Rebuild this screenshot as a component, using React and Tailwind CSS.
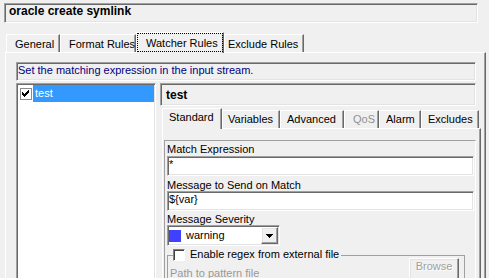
const sunken =
  "border border-t-[#a0a0a0] border-l-[#a0a0a0] border-r-white border-b-white shadow-[inset_1px_1px_0_#696969,inset_-1px_-1px_0_#e3e3e3]";
const raised =
  "border border-t-white border-l-white border-r-[#696969] border-b-[#696969] shadow-[inset_-1px_-1px_0_#a0a0a0,inset_1px_1px_0_#e3e3e3]";

function Tab({ w, pl, children, disabled }) {
  return (
    <div
      className={`${w} ${pl} h-[18px] shrink-0 border-t border-l border-white border-r border-r-[#696969] shadow-[inset_-1px_0_0_#a0a0a0] pt-[3px] whitespace-nowrap ${
        disabled ? "text-[#909090]" : ""
      }`}
    >
      {children}
    </div>
  );
}

function InnerTab({ w, pl, children, disabled }) {
  return (
    <div
      className={`${w} ${pl} h-[18px] shrink-0 border-t border-l border-white border-r border-r-[#696969] shadow-[inset_-1px_0_0_#a0a0a0] pt-[2px] whitespace-nowrap ${
        disabled ? "text-[#909090]" : ""
      }`}
    >
      {children}
    </div>
  );
}

function CheckMark() {
  return (
    <svg width="10" height="10" viewBox="0 0 10 10" shapeRendering="crispEdges">
      <path
        fill="#000"
        d="M7 1h1v1h-1z M6 2h2v1h-2z M1 3h1v1h-1z M5 3h3v1h-3z M1 4h2v1h-2z M4 4h3v1h-3z M1 5h5v1h-5z M2 6h3v1h-3z M3 7h1v1h-1z"
      />
    </svg>
  );
}

export default function App() {
  return (
    <div className="w-[489px] h-[278px] overflow-hidden bg-[#f0f0f0] text-black text-[11px] leading-[13px] font-['Liberation_Sans',Arial,sans-serif]">
      {/* Title */}
      <div className="pt-[3px] pl-[4px]">
        <div
          className={`w-[474px] h-[20px] ${sunken} pl-[4px] pt-[1px] font-bold text-[12px] leading-[12px]`}
        >
          oracle create symlink
        </div>
      </div>

      {/* Outer tabs */}
      <div className="mt-[9px] h-[20px] flex items-end pl-[6px]">
        <Tab w="w-[54px]" pl="pl-[8px]">General</Tab>
        <Tab w="w-[76px]" pl="pl-[8px]">Format Rules</Tab>
        <div className="relative z-10 -mb-px w-[88px] h-[21px] shrink-0 bg-[#f0f0f0] border-t border-l border-white border-r border-r-[#696969] shadow-[inset_-1px_0_0_#a0a0a0]">
          <div className="h-[19px] border border-dotted border-black pl-[8px] pt-[3px] whitespace-nowrap">
            Watcher Rules
          </div>
        </div>
        <Tab w="w-[80px]" pl="pl-[3px]">Exclude Rules</Tab>
      </div>

      {/* Outer panel */}
      <div className="ml-[5px] w-[481px] h-[240px] border-t border-l border-white border-r border-r-[#696969] shadow-[inset_-1px_0_0_#a0a0a0] pt-[9px] pl-[10px]">
        <div className={`w-[460px] h-[19px] ${sunken} pl-[1px] pt-[1px] text-[#000080] whitespace-nowrap`}>
          Set the matching expression in the input stream.
        </div>

        <div className="mt-[2px] flex">
          {/* List */}
          <div className={`w-[140px] h-[220px] shrink-0 bg-white ${sunken} p-[1px]`}>
            <div className="flex h-[17px]">
              <div className="w-[15px] flex items-center pl-[2px]">
                <div className="w-[12px] h-[12px] border border-[#8a8a8a] bg-white flex items-center justify-center">
                  <CheckMark />
                </div>
              </div>
              <div className="flex-1 bg-[#3399ff] text-white pl-[2px] pt-[2px]">test</div>
            </div>
          </div>

          {/* Right column */}
          <div className="ml-[4px] w-[321px] shrink-0">
            <div className={`w-[316px] h-[23px] ${sunken} flex items-center pl-[5px] font-bold text-[12px] leading-[14px]`}>
              test
            </div>

            <div className="mt-[2px] h-[20px] flex items-end pl-[2px]">
              <div className="relative z-10 -mb-px w-[60px] h-[21px] shrink-0 bg-[#f0f0f0] border-t border-l border-white border-r border-r-[#696969] shadow-[inset_-1px_0_0_#a0a0a0] pl-[6px] pt-[2px]">
                Standard
              </div>
              <InnerTab w="w-[58px]" pl="pl-[5px]">Variables</InnerTab>
              <InnerTab w="w-[64px]" pl="pl-[6px]">Advanced</InnerTab>
              <InnerTab w="w-[35px]" pl="pl-[8px]" disabled>QoS</InnerTab>
              <InnerTab w="w-[42px]" pl="pl-[6px]">Alarm</InnerTab>
              <InnerTab w="w-[58px]" pl="pl-[6px]">Excludes</InnerTab>
            </div>

            <div className="ml-[2px] w-[319px] h-[200px] border-t border-l border-white border-r border-r-[#696969] shadow-[inset_-1px_0_0_#a0a0a0] pt-[11px] pl-[1px]">
              <div className="w-[312px] h-[200px] border border-[#a0a0a0] border-r-white border-b-white pl-[2px]">
                <div className="h-[15px] pt-[2px] whitespace-nowrap">Match Expression</div>
                <div className={`w-[307px] h-[20px] bg-white ${sunken} pl-[1px] pt-[1px]`}>*</div>
                <div className="h-[15px] pt-[3px] whitespace-nowrap">Message to Send on Match</div>
                <div className={`w-[307px] h-[20px] bg-white ${sunken} pl-[1px] pt-[1px]`}>{"${var}"}</div>
                <div className="h-[14px] pt-[2px] whitespace-nowrap">Message Severity</div>
                <div className={`w-[113px] h-[21px] bg-white ${sunken} p-[1px] flex items-center`}>
                  <div className="w-[12px] h-[12px] bg-[#4040ff]" />
                  <div className="ml-[5px]">warning</div>
                  <div className={`ml-auto w-[17px] h-[17px] bg-[#f0f0f0] ${raised} flex items-center justify-center`}>
                    <svg width="7" height="4" viewBox="0 0 7 4" shapeRendering="crispEdges">
                      <path d="M0 0h7l-3.5 4z" fill="#000" />
                    </svg>
                  </div>
                </div>

                <fieldset className="mt-[2px] w-[298px] h-[60px] border border-[#a0a0a0]">
                  <legend className="ml-[5px] pr-[2px]">
                    <span className="inline-flex items-center h-[13px]">
                      <span className="w-[12px] h-[12px] border border-t-[#808080] border-l-[#808080] border-r-white border-b-white bg-white shadow-[inset_1px_1px_0_#404040]" />
                      <span className="ml-[5px] whitespace-nowrap">Enable regex from external file</span>
                    </span>
                  </legend>
                  <div className="flex justify-between items-start">
                    <div className="pl-[2px] mt-[3px] text-[#999999] whitespace-nowrap">Path to pattern file</div>
                    <div className={`-mt-[6px] mr-[5px] w-[50px] h-[23px] bg-[#f0f0f0] ${raised} flex justify-center items-start pt-[1px] text-[#a0a0a0] [text-shadow:1px_1px_0_#fff]`}>
                      Browse
                    </div>
                  </div>
                </fieldset>
              </div>
            </div>
          </div>
        </div>
      </div>
    </div>
  );
}
